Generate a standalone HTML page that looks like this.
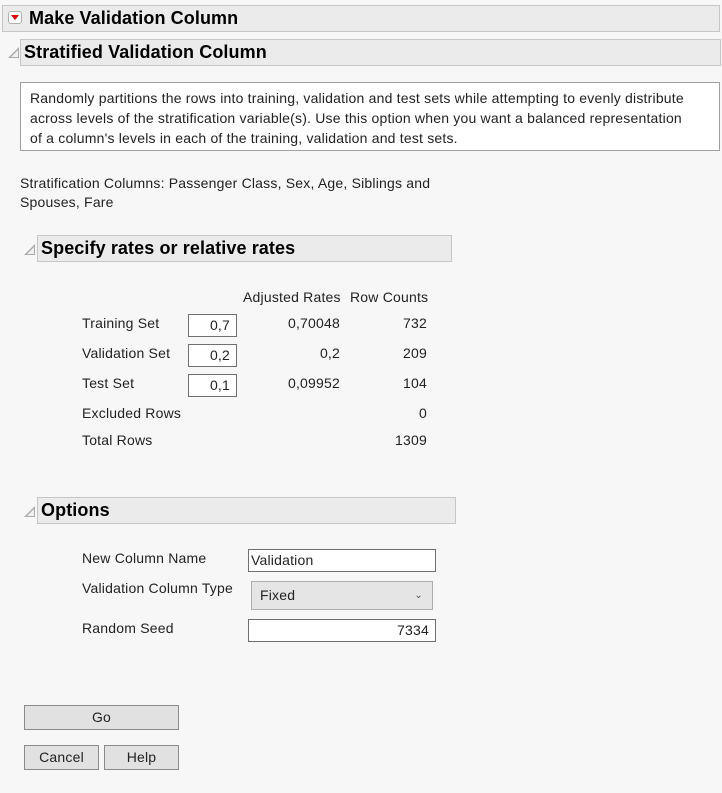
<!DOCTYPE html>
<html><head><style>
body{margin:0;width:722px;height:793px;background:#f7f7f7;font-family:"Liberation Sans",sans-serif;font-size:14px;letter-spacing:0.2px;color:#222;position:relative;overflow:hidden}
.a{position:absolute;white-space:nowrap}
.bar{position:absolute;background:#ebebeb;border:1px solid #c6c6c6;box-sizing:border-box;font-weight:bold;font-size:18px;letter-spacing:0.1px;color:#000;line-height:24px}
.tri{position:absolute;width:0;height:0;border-left:11px solid transparent;border-bottom:11px solid #aaa}
.tri:after{content:"";position:absolute;left:-8px;top:3px;border-left:7px solid transparent;border-bottom:7px solid #f0f0f0}
.in{position:absolute;background:#fff;border:1px solid #707070;box-sizing:border-box;text-align:right;padding-right:6px;line-height:20px}
.btn{position:absolute;background:#e1e1e1;border:1px solid #8a8a8a;box-sizing:border-box;text-align:center;line-height:22px}
.r{text-align:right}
</style></head><body>
<div class="bar" style="left:2px;top:5px;width:718px;height:27px;padding-left:26px">Make Validation Column</div>
<div class="a" style="left:8px;top:11px;width:14px;height:13px;background:#fff;border:1px solid #b0b0b0;border-radius:3px;box-sizing:border-box"></div>
<div class="a" style="left:11px;top:15px;width:0;height:0;border-left:4px solid transparent;border-right:4px solid transparent;border-top:5px solid #d00"></div>
<div class="tri" style="left:8px;top:47px"></div>
<div class="bar" style="left:20px;top:39px;width:701px;height:27px;padding-left:3px">Stratified Validation Column</div>
<div class="a" style="left:20px;top:82px;width:700px;height:69px;background:#fff;border:1px solid #a0a0a0;box-sizing:border-box;padding:5px 0 0 9px;line-height:20px">Randomly partitions the rows into training, validation and test sets while attempting to evenly distribute<br>across levels of the stratification variable(s). Use this option when you want a balanced representation<br>of a column's levels in each of the training, validation and test sets.</div>
<div class="a" style="left:20px;top:174px;line-height:19px">Stratification Columns: Passenger Class, Sex, Age, Siblings and<br>Spouses, Fare</div>
<div class="tri" style="left:24px;top:244px"></div>
<div class="bar" style="left:37px;top:235px;width:415px;height:27px;padding-left:3px">Specify rates or relative rates</div>
<div class="a" style="left:243px;top:289px">Adjusted Rates</div>
<div class="a" style="left:350px;top:289px">Row Counts</div>
<div class="a" style="left:82px;top:315px">Training Set</div>
<div class="a" style="left:82px;top:345px">Validation Set</div>
<div class="a" style="left:82px;top:375px">Test Set</div>
<div class="a" style="left:82px;top:405px">Excluded Rows</div>
<div class="a" style="left:82px;top:432px">Total Rows</div>
<div class="in" style="left:188px;top:314px;width:49px;height:23px">0,7</div>
<div class="in" style="left:188px;top:344px;width:49px;height:23px">0,2</div>
<div class="in" style="left:188px;top:374px;width:49px;height:23px">0,1</div>
<div class="a r" style="left:260px;top:315px;width:80px">0,70048</div>
<div class="a r" style="left:260px;top:345px;width:80px">0,2</div>
<div class="a r" style="left:260px;top:375px;width:80px">0,09952</div>
<div class="a r" style="left:360px;top:315px;width:67px">732</div>
<div class="a r" style="left:360px;top:345px;width:67px">209</div>
<div class="a r" style="left:360px;top:375px;width:67px">104</div>
<div class="a r" style="left:360px;top:405px;width:67px">0</div>
<div class="a r" style="left:360px;top:432px;width:67px">1309</div>
<div class="tri" style="left:24px;top:506px"></div>
<div class="bar" style="left:37px;top:497px;width:419px;height:27px;padding-left:3px">Options</div>
<div class="a" style="left:82px;top:550px">New Column Name</div>
<div class="a" style="left:82px;top:580px">Validation Column Type</div>
<div class="a" style="left:82px;top:620px">Random Seed</div>
<div class="in" style="left:248px;top:549px;width:188px;height:23px;text-align:left;padding-left:2px">Validation</div>
<div class="a" style="left:251px;top:581px;width:182px;height:29px;background:#e5e5e5;border:1px solid #adadad;box-sizing:border-box;line-height:27px;padding-left:8px">Fixed<span style="position:absolute;right:9px;top:0;font-size:10px;color:#555">&#8964;</span></div>
<div class="in" style="left:248px;top:619px;width:188px;height:23px">7334</div>
<div class="btn" style="left:24px;top:705px;width:155px;height:25px">Go</div>
<div class="btn" style="left:24px;top:745px;width:75px;height:25px">Cancel</div>
<div class="btn" style="left:104px;top:745px;width:75px;height:25px">Help</div>
</body></html>
